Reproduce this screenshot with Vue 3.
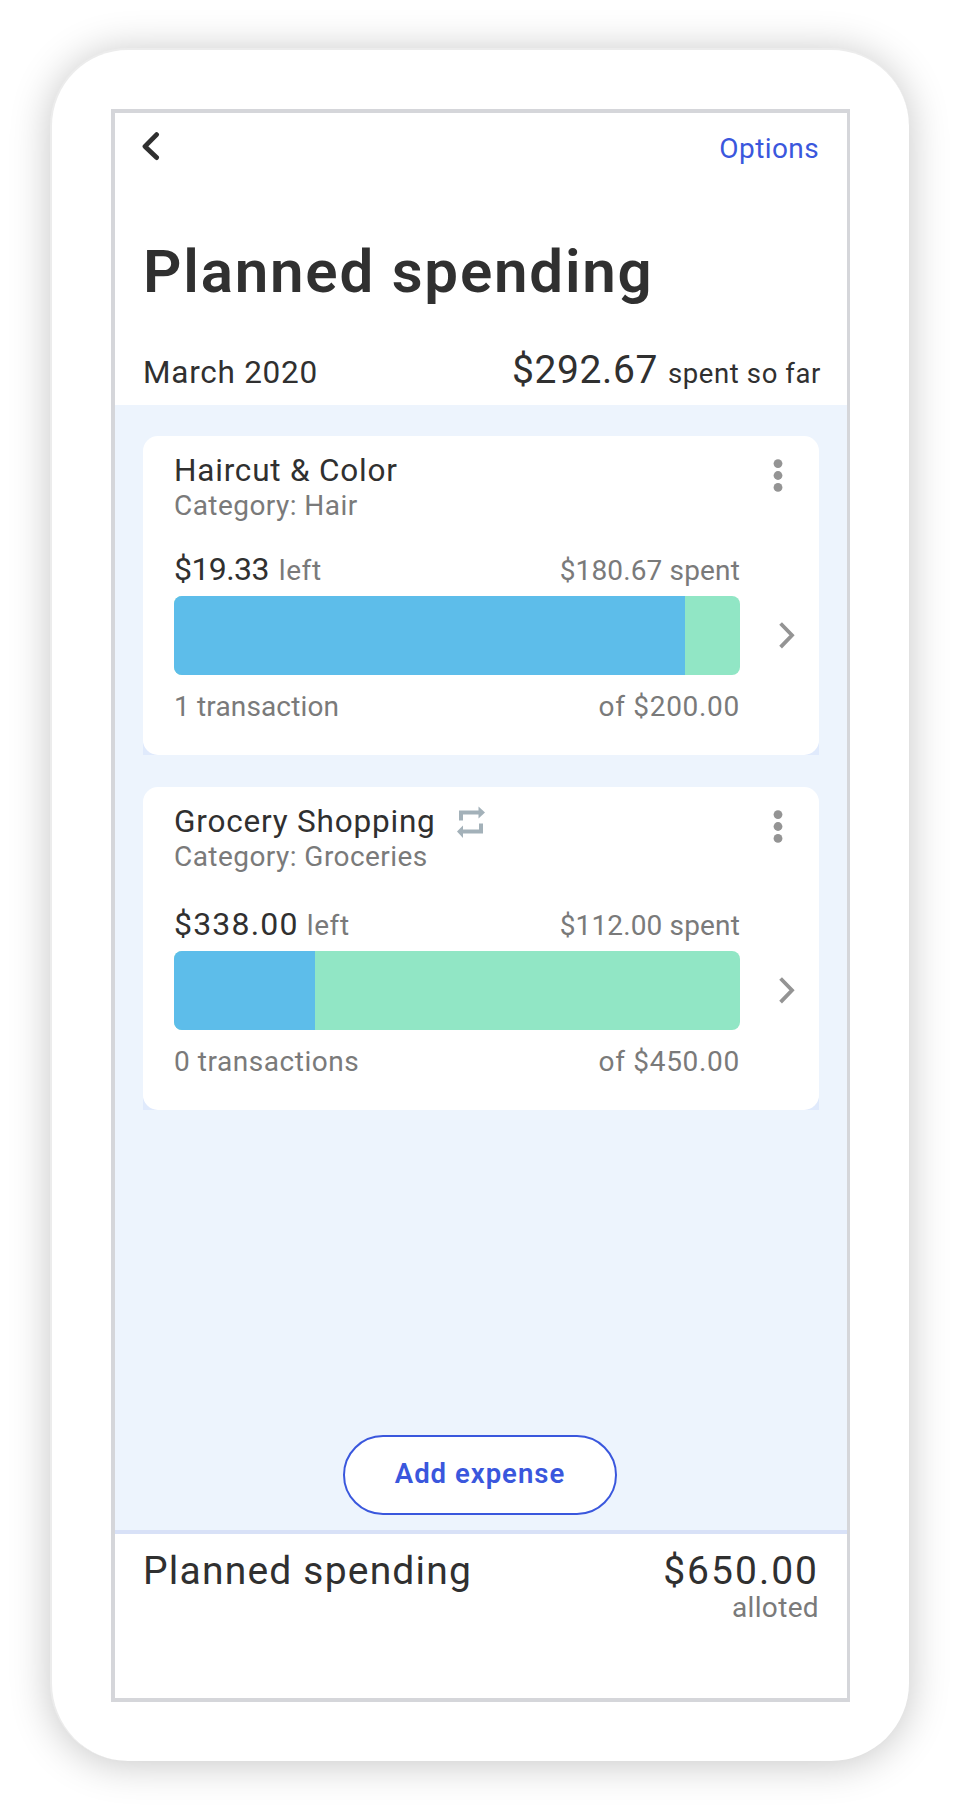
<template>
  <div class="page">
    <div class="device">
      <div class="screen">
        <header class="header">
          <div class="top-bar">
            <button class="icon-btn" title="Back">
              <svg class="back-icon" viewBox="0 0 18 30">
                <path d="M14.6 3.6 L3 15.4 L14.6 26.6" />
              </svg>
            </button>
            <a class="options-link">Options</a>
          </div>
          <h1 class="title">Planned spending</h1>
          <div class="summary">
            <span class="month">March 2020</span>
            <span class="total">
              <span class="total-amount">{{ money(totalSpent) }}</span>
              <span class="total-label">spent so far</span>
            </span>
          </div>
        </header>

        <main class="content">
          <div
            v-for="expense in expenses"
            :key="expense.name"
            class="card-wrap"
          >
            <section class="card" :class="{ recurring: expense.recurring }">
              <div class="card-head">
                <div class="card-titles">
                  <div class="name-row">
                    <h2 class="name">{{ expense.name }}</h2>
                    <svg v-if="expense.recurring" class="repeat-icon" viewBox="0 0 30 34">
                      <path class="line" d="M5 15.5 V7.6 H23" />
                      <path class="line" d="M25 18.5 V26.6 H7" />
                      <path class="arrow" d="M22.5 1.5 L29 7.6 L22.5 13.5 Z" />
                      <path class="arrow" d="M7 20.5 L1 26.6 L7 33 Z" />
                    </svg>
                  </div>
                  <p class="category">Category: {{ expense.category }}</p>
                </div>
                <button class="icon-btn" title="More">
                  <svg class="more-icon" viewBox="0 0 10 34">
                    <circle cx="5" cy="4.6" r="4.4" />
                    <circle cx="5" cy="16.5" r="4.4" />
                    <circle cx="5" cy="28.4" r="4.4" />
                  </svg>
                </button>
              </div>

              <div class="amounts">
                <span class="left">
                  <span class="left-amount" :class="{ narrow: expense.left < 100 }">{{ money(expense.left) }}</span>
                  <span class="left-label">left</span>
                </span>
                <span class="spent">{{ money(expense.spent) }} spent</span>
              </div>

              <div class="bar-row">
                <div class="bar">
                  <div class="bar-fill" :style="{ width: percent(expense) + '%' }"></div>
                </div>
                <svg class="next-icon" viewBox="0 0 18 28">
                  <path d="M2.6 1.5 L14 13.3 L2.6 25.1" />
                </svg>
              </div>

              <div class="card-foot">
                <span :class="{ narrow: expense.transactions === 1 }">{{ countLabel(expense.transactions) }}</span>
                <span class="budget">of {{ money(expense.budget) }}</span>
              </div>
            </section>
          </div>

          <button class="add-btn">Add expense</button>
        </main>

        <footer class="footer">
          <span class="footer-title">Planned spending</span>
          <div class="footer-total">
            <span class="footer-amount">{{ money(totalBudget) }}</span>
            <span class="footer-label">alloted</span>
          </div>
        </footer>
      </div>
    </div>
  </div>
</template>

<script setup>
import { ref, computed } from 'vue'

const expenses = ref([
  {
    name: 'Haircut & Color',
    category: 'Hair',
    left: 19.33,
    spent: 180.67,
    budget: 200,
    transactions: 1,
    recurring: false
  },
  {
    name: 'Grocery Shopping',
    category: 'Groceries',
    left: 338,
    spent: 112,
    budget: 450,
    transactions: 0,
    recurring: true
  }
])

const totalSpent = computed(() => expenses.value.reduce((sum, e) => sum + e.spent, 0))
const totalBudget = computed(() => expenses.value.reduce((sum, e) => sum + e.budget, 0))

const money = (value) => `$${value.toFixed(2)}`

const percent = (expense) => (expense.spent / expense.budget) * 100

const countLabel = (n) => `${n} transaction${n === 1 ? '' : 's'}`
</script>

<style>
body {
  background: #fff;
}
</style>

<style scoped>
* {
  box-sizing: border-box;
}

.page {
  height: 1814px;
  padding: 48px 50px 0;
  overflow: hidden;
  background: #fff;
  font-family: Roboto, "Liberation Sans", sans-serif;
  color: #303030;
}

h1,
h2,
p {
  margin: 0;
}

button {
  font-family: inherit;
  cursor: pointer;
}

.device {
  width: 859px;
  height: 1713px;
  padding: 59px;
  border-top: 2px solid #ececec;
  border-left: 2px solid #ececec;
  border-radius: 78px;
  background: #fff;
  box-shadow: 0 3px 40px rgba(0, 0, 0, 0.23);
}

.screen {
  display: flex;
  flex-direction: column;
  height: 1593px;
  border: 4px solid #d5d6da;
  border-right-width: 3px;
}

/* header */
.header {
  height: 292px;
  padding: 0 28px;
}

.top-bar {
  display: flex;
  justify-content: space-between;
  align-items: center;
  height: 66px;
}

.icon-btn {
  display: flex;
  padding: 0;
  border: none;
  background: none;
}

.back-icon {
  width: 18px;
  height: 30px;
  margin-left: -1px;
  fill: none;
  stroke: #2f2f2f;
  stroke-width: 4.8;
  stroke-linecap: round;
  stroke-linejoin: round;
}

.options-link {
  padding-top: 5px;
  font-size: 28px;
  line-height: 34px;
  letter-spacing: 0.4px;
  color: #3a57dd;
}

.title {
  margin-top: 58px;
  font-size: 60px;
  font-weight: 600;
  line-height: 70px;
  letter-spacing: 1.8px;
}

.summary {
  display: flex;
  justify-content: space-between;
  align-items: baseline;
  margin-top: 39px;
}

.month {
  font-size: 31.5px;
  letter-spacing: 0.75px;
}

.total {
  display: flex;
  align-items: baseline;
  gap: 10px;
  line-height: 48px;
}

.total-amount {
  font-size: 39px;
  letter-spacing: 0.6px;
}

.total-label {
  margin-right: -2px;
  font-size: 27.5px;
  letter-spacing: 0.6px;
}

/* cards */
.content {
  flex: 1;
  display: flex;
  flex-direction: column;
  gap: 32px;
  padding: 31px 28px 15px;
  background: #edf4fd;
}

.card-wrap {
  background: linear-gradient(transparent calc(100% - 12px), #e0eafc 0);
}

.card {
  padding: 17px 23px 31px 31px;
  border-radius: 15px;
  background: #fff;
}

.card-head {
  display: flex;
  justify-content: space-between;
  align-items: flex-start;
}

.card-head .icon-btn {
  margin: 6px 13px 0 0;
}

.name-row {
  display: flex;
  align-items: center;
  gap: 20px;
  height: 36px;
}

.name {
  font-size: 31.5px;
  font-weight: 400;
  line-height: 36px;
  letter-spacing: 0.8px;
}

.repeat-icon {
  width: 30px;
  height: 34px;
}

.repeat-icon .line {
  fill: none;
  stroke: #a3b1b9;
  stroke-width: 4;
}

.repeat-icon .arrow {
  fill: #a3b1b9;
}

.category {
  font-size: 28px;
  line-height: 34px;
  letter-spacing: 0.45px;
  color: #7a7a7a;
}

.more-icon {
  width: 10px;
  height: 34px;
  fill: #949494;
}

.amounts {
  display: flex;
  justify-content: space-between;
  align-items: baseline;
  width: 566px;
  height: 40px;
  margin-top: 26px;
  line-height: 40px;
}

.recurring .amounts {
  margin-top: 30px;
}

.left {
  display: flex;
  align-items: baseline;
  gap: 8px;
}

.left-amount {
  font-size: 32px;
  letter-spacing: 1.2px;
}

.left-amount.narrow {
  margin-right: 2px;
  letter-spacing: -0.6px;
}

.left-label,
.spent {
  font-size: 28px;
  letter-spacing: 0.15px;
  color: #7a7a7a;
}

.left-label {
  letter-spacing: 0.6px;
}

.bar-row {
  display: flex;
  justify-content: space-between;
  align-items: center;
  margin-top: 7px;
}

.bar {
  width: 566px;
  height: 79px;
  border-radius: 8px;
  overflow: hidden;
  background: #91e6c5;
}

.bar-fill {
  height: 100%;
  background: #5dbdea;
}

.next-icon {
  width: 18px;
  height: 28px;
  fill: none;
  stroke: #949494;
  stroke-width: 3.8;
}

.card-foot {
  display: flex;
  justify-content: space-between;
  width: 566px;
  margin-top: 15px;
  font-size: 28px;
  line-height: 34px;
  letter-spacing: 0.55px;
  color: #7a7a7a;
}

.card-foot .narrow {
  letter-spacing: 0.15px;
}

.budget {
  letter-spacing: 0.7px;
}

.add-btn {
  align-self: center;
  width: 274px;
  height: 80px;
  margin-top: auto;
  margin-right: 2px;
  padding: 0 0 3px;
  border: 2px solid #3a57dd;
  border-radius: 40px;
  background: #fff;
  font-size: 27.5px;
  font-weight: 600;
  letter-spacing: 1px;
  color: #3a57dd;
}

/* footer */
.footer {
  display: flex;
  justify-content: space-between;
  align-items: flex-start;
  height: 168px;
  padding: 15px 28px 0;
  border-top: 4px solid #d8e1f7;
}

.footer-title,
.footer-amount {
  font-size: 39px;
  line-height: 44px;
  letter-spacing: 1.2px;
}

.footer-amount {
  letter-spacing: 2px;
}

.footer-total {
  display: flex;
  flex-direction: column;
  align-items: flex-end;
}

.footer-label {
  font-size: 28px;
  line-height: 30px;
  letter-spacing: 0.35px;
  color: #7a7a7a;
}
</style>
